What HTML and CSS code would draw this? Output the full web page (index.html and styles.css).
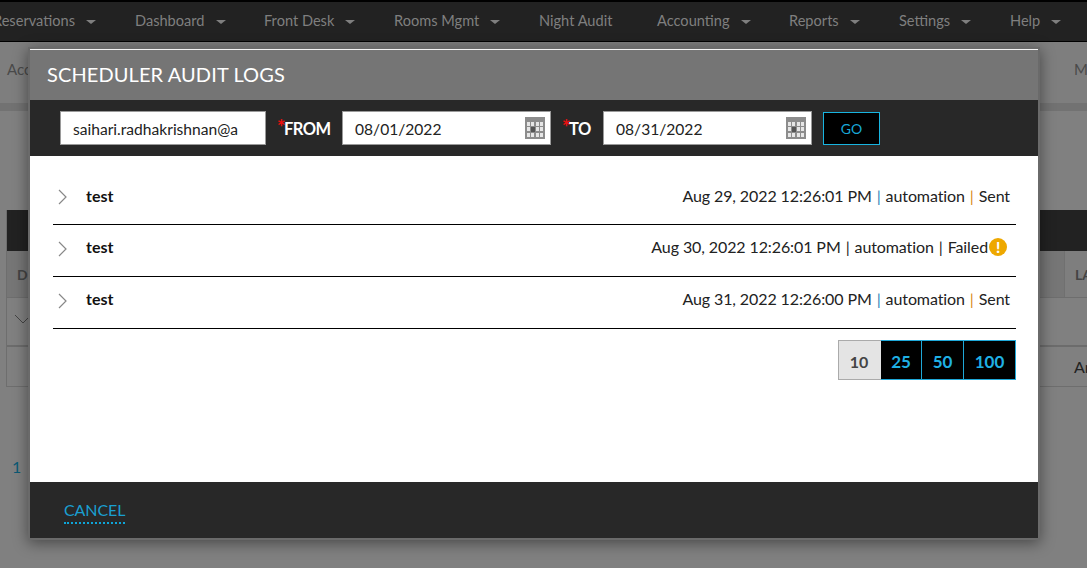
FILE: index.html
```html
<!DOCTYPE html>
<html lang="en">
<head>
<meta charset="utf-8">
<title>Scheduler Audit Logs</title>
<link rel="stylesheet" href="styles.css">
</head>
<body>
<nav class="nav">
  <span class="nav-item w-res">Reservations<i class="caret"></i></span>
  <span class="nav-item w-dash">Dashboard<i class="caret"></i></span>
  <span class="nav-item w-front">Front Desk<i class="caret"></i></span>
  <span class="nav-item w-rooms">Rooms Mgmt<i class="caret"></i></span>
  <span class="nav-item w-night">Night Audit</span>
  <span class="nav-item w-acct">Accounting<i class="caret"></i></span>
  <span class="nav-item w-rep">Reports<i class="caret"></i></span>
  <span class="nav-item w-set">Settings<i class="caret"></i></span>
  <span class="nav-item">Help<i class="caret"></i></span>
</nav>
<div class="subnav"><span>Acc</span><span>M</span></div>
<main class="page">
  <div class="table">
    <div class="table-head"></div>
    <div class="table-cols"><b>DI</b><b class="col-last">LA</b></div>
    <div class="table-row"><svg class="row-chev" width="18" height="10" viewBox="0 0 18 10"><path d="M1 1l8 8 8-8" fill="none" stroke="#444" stroke-width="1"/></svg></div>
    <div class="table-row2"><span>An</span></div>
  </div>
  <div class="page-num">1</div>
</main>

<div class="backdrop">
  <section class="modal">
    <header class="modal-title">SCHEDULER AUDIT LOGS</header>
    <div class="toolbar">
      <div class="field field-user">saihari.radhakrishnan@a</div>
      <label class="lbl lbl-from"><em>*</em>FROM</label>
      <div class="field field-date">08/01/2022
        <svg class="cal" width="20" height="22" viewBox="0 0 20 22"><rect width="20" height="22" fill="#8c8c8c"/><path d="M2 5h3v4H2zM6 5h3v4H6zM11 5h3v4h-3zM15 5h3v4h-3zM2 10h3v4H2zM11 10h3v4h-3zM15 10h3v4h-3zM2 16h3v4H2zM6 16h3v4H6zM11 16h3v4h-3zM15 16h3v4h-3z" fill="#e6e6e6"/><path d="M6 10h4v5H6z" fill="#555"/></svg>
      </div>
      <label class="lbl lbl-to"><em>*</em>TO</label>
      <div class="field field-date">08/31/2022
        <svg class="cal" width="20" height="22" viewBox="0 0 20 22"><rect width="20" height="22" fill="#8c8c8c"/><path d="M2 5h3v4H2zM6 5h3v4H6zM11 5h3v4h-3zM15 5h3v4h-3zM2 10h3v4H2zM11 10h3v4h-3zM15 10h3v4h-3zM2 16h3v4H2zM6 16h3v4H6zM11 16h3v4h-3zM15 16h3v4h-3z" fill="#e6e6e6"/><path d="M6 10h4v5H6z" fill="#555"/></svg>
      </div>
      <button class="go">GO</button>
    </div>
    <div class="modal-body">
      <div class="log">
        <svg class="chev" width="9" height="16" viewBox="0 0 9 16"><path d="M1 1l7 7-7 7" fill="none" stroke="#888" stroke-width="1.200"/></svg>
        <strong class="log-name">test</strong>
        <span class="log-meta">Aug 29, 2022 12:26:01 PM <i class="sep-b">|</i> automation <i class="sep-o">|</i> Sent</span>
      </div>
      <div class="log log-mid">
        <svg class="chev" width="9" height="16" viewBox="0 0 9 16"><path d="M1 1l7 7-7 7" fill="none" stroke="#888" stroke-width="1.200"/></svg>
        <strong class="log-name">test</strong>
        <span class="log-meta log-failed">Aug 30, 2022 12:26:01 PM <i class="sep-d">|</i> automation <i class="sep-d">|</i> Failed<b class="warn">!</b></span>
      </div>
      <div class="log log-last">
        <svg class="chev" width="9" height="16" viewBox="0 0 9 16"><path d="M1 1l7 7-7 7" fill="none" stroke="#888" stroke-width="1.200"/></svg>
        <strong class="log-name">test</strong>
        <span class="log-meta">Aug 31, 2022 12:26:00 PM <i class="sep-b">|</i> automation <i class="sep-o">|</i> Sent</span>
      </div>
      <div class="pager">
        <span class="pg pg-on">10</span><span class="pg pg-25">25</span><span class="pg pg-50">50</span><span class="pg pg-100">100</span>
      </div>
    </div>
    <footer class="modal-foot"><a class="cancel">CANCEL</a></footer>
  </section>
</div>
</body>
</html>
```
FILE: styles.css
```css
* { box-sizing: border-box; }
html, body { margin: 0; height: 100%; overflow: hidden; }
body {
  font-family: "Lato", "Liberation Sans", sans-serif;
  background: #808080;
  color: #2a2a2a;
  font-size: 16px;
}
.nav {
  height: 42px;
  background: #222;
  border-top: 2px solid #000;
  border-bottom: 1px solid #000;
  display: flex;
  align-items: center;
  padding-bottom: 3px;
  color: #7f7f7f;
  font-size: 14.600px;
  overflow: hidden;
}
.nav-item { flex: none; white-space: nowrap; display: flex; align-items: center; }
.w-res { width: 142px; margin-left: -7px; }
.w-dash { width: 129px; }
.w-front { width: 130px; }
.w-rooms { width: 145px; }
.w-night { width: 118px; }
.w-acct { width: 132px; }
.w-rep { width: 110px; }
.w-set { width: 111px; }
.caret {
  display: inline-block;
  margin-left: 11px;
  margin-top: 4px;
  border-left: 5px solid transparent;
  border-right: 5px solid transparent;
  border-top: 4px solid #7f7f7f;
}
.subnav {
  height: 69px;
  background: #7e7e7e;
  border-bottom: 8px solid #727272;
  display: flex;
  justify-content: space-between;
  align-items: center;
  padding: 0 0 8px 7px;
  color: #4a4a4a;
  font-size: 15px;
  overflow: hidden;
}
.subnav span:last-child { margin-right: -1px; }
.page { padding: 99px 0 0 6px; }
.table { width: 1100px; border-left: 1px solid #6e6e6e; }
.table-head { height: 41px; background: #222; }
.table-cols {
  height: 47px;
  background: #767676;
  display: flex;
  align-items: center;
  padding: 0 0 0 10px;
  font-size: 14px;
  color: #444;
  border-bottom: 1px solid #6e6e6e;
  position: relative;
}
.col-last {
  position: absolute;
  left: 1057px;
  top: 0;
  bottom: 0;
  width: 60px;
  display: flex;
  align-items: center;
  padding-left: 10px;
  background: #7e7e7e;
  border-left: 1px solid #707070;
}
.table-row { height: 49px; border-bottom: 2px solid #6c6c6c; padding: 16px 0 0 7px; }
.row-chev { display: block; }
.table-row2 { height: 40px; border-bottom: 1px solid #6e6e6e; display: flex; align-items: center; }
.table-row2 span { margin-left: 1067px; color: #222; font-size: 16px; }
.page-num { margin: 70px 0 0 6px; color: #0b5a75; font-size: 16px; }

.backdrop { position: absolute; inset: 0; }
.modal {
  position: absolute;
  left: 28px;
  top: 47px;
  width: 1012px;
  height: 493px;
  border: 2px solid #6a6a6a;
  box-shadow: 0 3px 14px rgba(0,0,0,.45);
  display: flex;
  flex-direction: column;
  background: #fff;
}
.modal-title {
  height: 51px;
  background: #757575;
  border-top: 1px solid #f4f4f4;
  color: #fff;
  font-size: 20px;
  letter-spacing: .1px;
  line-height: 48px;
  padding-left: 17px;
  flex: none;
}
.toolbar {
  height: 56px;
  background: #282828;
  flex: none;
  display: flex;
  align-items: center;
  padding-left: 30px;
}
.field {
  height: 34px;
  background: #fff;
  border: 1px solid #9a9a9a;
  color: #222;
  font-size: 15.600px;
  display: flex;
  align-items: center;
  padding: 2px 0 0 12px;
  position: relative;
}
.field-user { width: 206px; }
.field-date { width: 209px; }
.cal { position: absolute; right: 5px; top: 5px; }
.lbl {
  color: #fff;
  font-weight: 700;
  font-size: 16.500px;
  letter-spacing: -.5px;
  white-space: nowrap;
  flex: none;
  padding-top: 2px;
}
.lbl em { color: #e81010; font-style: normal; font-weight: 900; font-size: 20px; line-height: 0; margin: 0 -1px 0 -1px; }
.lbl-from { width: 53px; margin: 0 11px 0 12px; }
.lbl-to { width: 29px; margin: 0 11px 0 12px; }
.go {
  width: 57px;
  height: 33px;
  margin-left: 11px;
  padding: 0;
  background: #000;
  border: 1px solid #18b4e0;
  color: #18a8d8;
  font: 14px "Lato", sans-serif;
}
.modal-body { flex: 1; padding: 17px 22px 0 23px; background: #fff; }
.log {
  height: 52px;
  display: flex;
  align-items: center;
  border-bottom: 1px solid #000;
  padding: 0 6px 7px 5px;
}
.log-mid { padding-bottom: 8px; }
.log-last { padding-bottom: 8px; }
.chev { flex: none; margin-top: 4px; }
.log-name { margin-left: 19px; font-weight: 700; color: #111; }
.log-meta { margin-left: auto; color: #222; white-space: pre; font-size: 16px; letter-spacing: -.1px; }
.log-failed { margin-right: 3px; }
.log i { font-style: normal; margin: 0 1px; }
.sep-b { color: #2a7fb8; }
.sep-o { color: #d98a1a; }
.sep-d { color: #222; }
.warn {
  display: inline-flex;
  width: 18px;
  height: 18px;
  margin: -3px 0 -3px 1px;
  border-radius: 50%;
  background: #eea800;
  color: #fff;
  font-size: 15px;
  font-weight: 900;
  align-items: center;
  justify-content: center;
  vertical-align: 0;
}
.pager { display: flex; justify-content: flex-end; margin-top: 11px; }
.pg {
  height: 40px;
  display: flex;
  align-items: center;
  justify-content: center;
  padding-top: 2px;
  font-weight: 700;
  font-size: 17px;
  background: #000;
  color: #1fb0e4;
  border: 1px solid #1fa8d8;
  border-left-width: 0;
}
.pg-on { width: 43px; padding-right: 2px; background: #e4e4e4; color: #444; border: 1px solid #aaa; border-right: 0; font-size: 16px; }
.pg-25 { width: 41px; }
.pg-50 { width: 42px; }
.pg-100 { width: 52px; }
.modal-foot {
  height: 56px;
  background: #282828;
  flex: none;
  padding: 17px 0 0 34px;
}
.cancel {
  color: #1a9fd0;
  font-size: 16px;
  letter-spacing: -.1px;
  border-bottom: 2px dotted #0ea5d8;
  display: inline-block;
  padding-bottom: 1px;
  line-height: 22px;
}
```
